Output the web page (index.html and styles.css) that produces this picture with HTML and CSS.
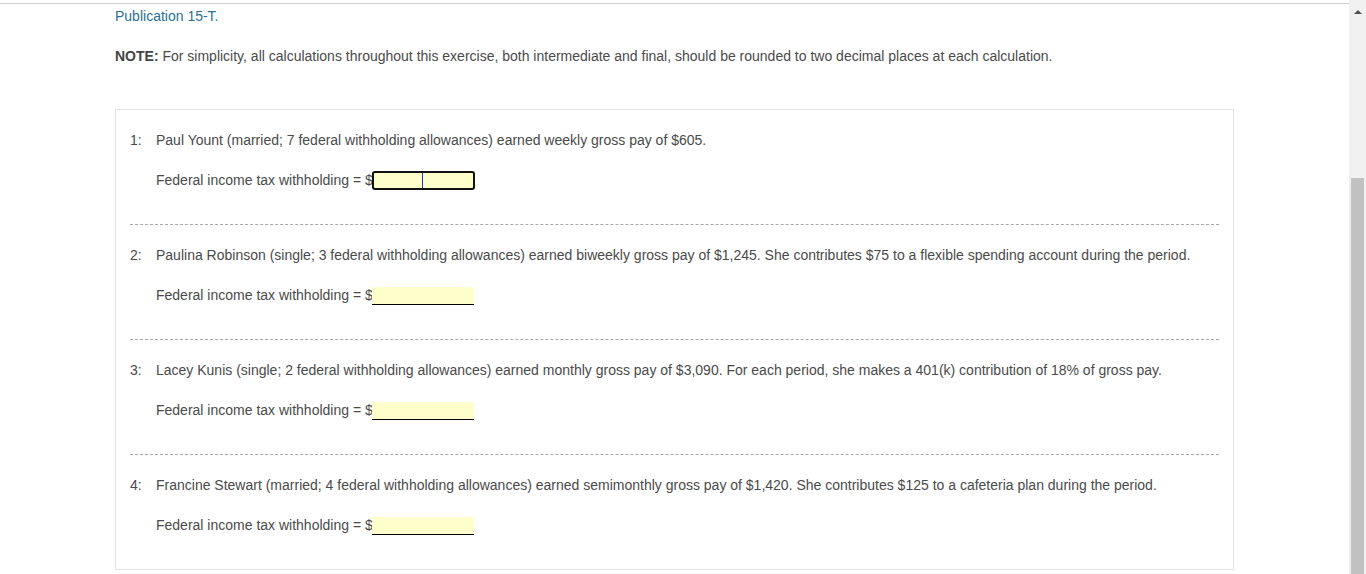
FILE: index.html
```html
<!DOCTYPE html>
<html lang="en">
<head>
  <meta charset="UTF-8">
  <title>Federal income tax withholding</title>
  <link rel="stylesheet" href="styles.css">
</head>
<body>

  <div class="page">
    <div class="content">
      <p class="pub">Publication 15-T.</p>

      <p class="note"><b>NOTE:</b> For simplicity, all calculations throughout this exercise, both intermediate and final, should be rounded to two decimal places at each calculation.</p>

      <!-- Liste des questions -->
      <div class="questions">
        <div class="question">
          <div class="q-line"><span class="num">1:</span><span>Paul Yount (married; 7 federal withholding allowances) earned weekly gross pay of $605.</span></div>
          <div class="answer">Federal income tax withholding = $<span class="field active"></span></div>
        </div>
        <div class="question">
          <div class="q-line"><span class="num">2:</span><span>Paulina Robinson (single; 3 federal withholding allowances) earned biweekly gross pay of $1,245. She contributes $75 to a flexible spending account during the period.</span></div>
          <div class="answer">Federal income tax withholding = $<span class="field"></span></div>
        </div>
        <div class="question">
          <div class="q-line"><span class="num">3:</span><span>Lacey Kunis (single; 2 federal withholding allowances) earned monthly gross pay of $3,090. For each period, she makes a 401(k) contribution of 18% of gross pay.</span></div>
          <div class="answer">Federal income tax withholding = $<span class="field"></span></div>
        </div>
        <div class="question">
          <div class="q-line"><span class="num">4:</span><span>Francine Stewart (married; 4 federal withholding allowances) earned semimonthly gross pay of $1,420. She contributes $125 to a cafeteria plan during the period.</span></div>
          <div class="answer">Federal income tax withholding = $<span class="field"></span></div>
        </div>
      </div>
    </div>

    <!-- Barre de défilement -->
    <div class="scrollbar">
      <div class="arrow"></div>
      <div class="thumb"></div>
    </div>
  </div>

</body>
</html>
```

FILE: styles.css
```css
html, body {
  margin: 0;
  height: 100%;
  overflow: hidden;
  background-color: #fff;
}

body {
  font-family: "Liberation Sans", Arial, sans-serif;
  font-size: 14px;
  color: #4a4a4a;
}

.page {
  display: flex;
  height: 574px;
}

.content {
  flex: 1;
  margin-top: 3px;
  border-top: 1px solid #cfcfcf;
  padding-left: 115px;
  padding-right: 115px;
}

.pub {
  margin: 3px 0 0 0;
  line-height: 18px;
  color: #2b7095;
}

.note {
  margin: 22px 0 0 0;
  line-height: 18px;
}

.note b {
  color: #444;
}

/* Cadre des questions */
.questions {
  margin-top: 44px;
  border: 1px solid #e2e2e2;
  padding: 0 14px;
}

.question {
  padding: 21px 0 35px 0;
  border-bottom: 1px dashed #a8a8a8;
}

.question:last-child {
  border-bottom: none;
}

.q-line {
  display: flex;
  line-height: 18px;
}

.num {
  width: 26px;
  flex-shrink: 0;
}

.answer {
  display: flex;
  align-items: center;
  height: 19px;
  margin-top: 21px;
  padding-left: 26px;
}

.field {
  display: inline-block;
  width: 102px;
  height: 18px;
  margin-top: 2px;
  margin-left: -1px;
  background-color: #ffffcc;
  border-bottom: 1px solid #000;
  box-sizing: border-box;
}

.field.active {
  border: 2px solid #111;
  border-radius: 3px;
  height: 19px;
  width: 103px;
  background: linear-gradient(#2233cc, #2233cc) 48px 0 / 1px 15px no-repeat, #ffffcc;
}

/* Barre de défilement */
.scrollbar {
  width: 17px;
  flex-shrink: 0;
  background-color: #f1f1f1;
  display: flex;
  flex-direction: column;
  align-items: center;
}

.arrow {
  margin-top: 10px;
  width: 0;
  height: 0;
  border-left: 4px solid transparent;
  border-right: 4px solid transparent;
  border-bottom: 4px solid #505050;
}

.thumb {
  margin-top: 164px;
  width: 13px;
  flex: 1;
  background-color: #c1c1c1;
}
```
